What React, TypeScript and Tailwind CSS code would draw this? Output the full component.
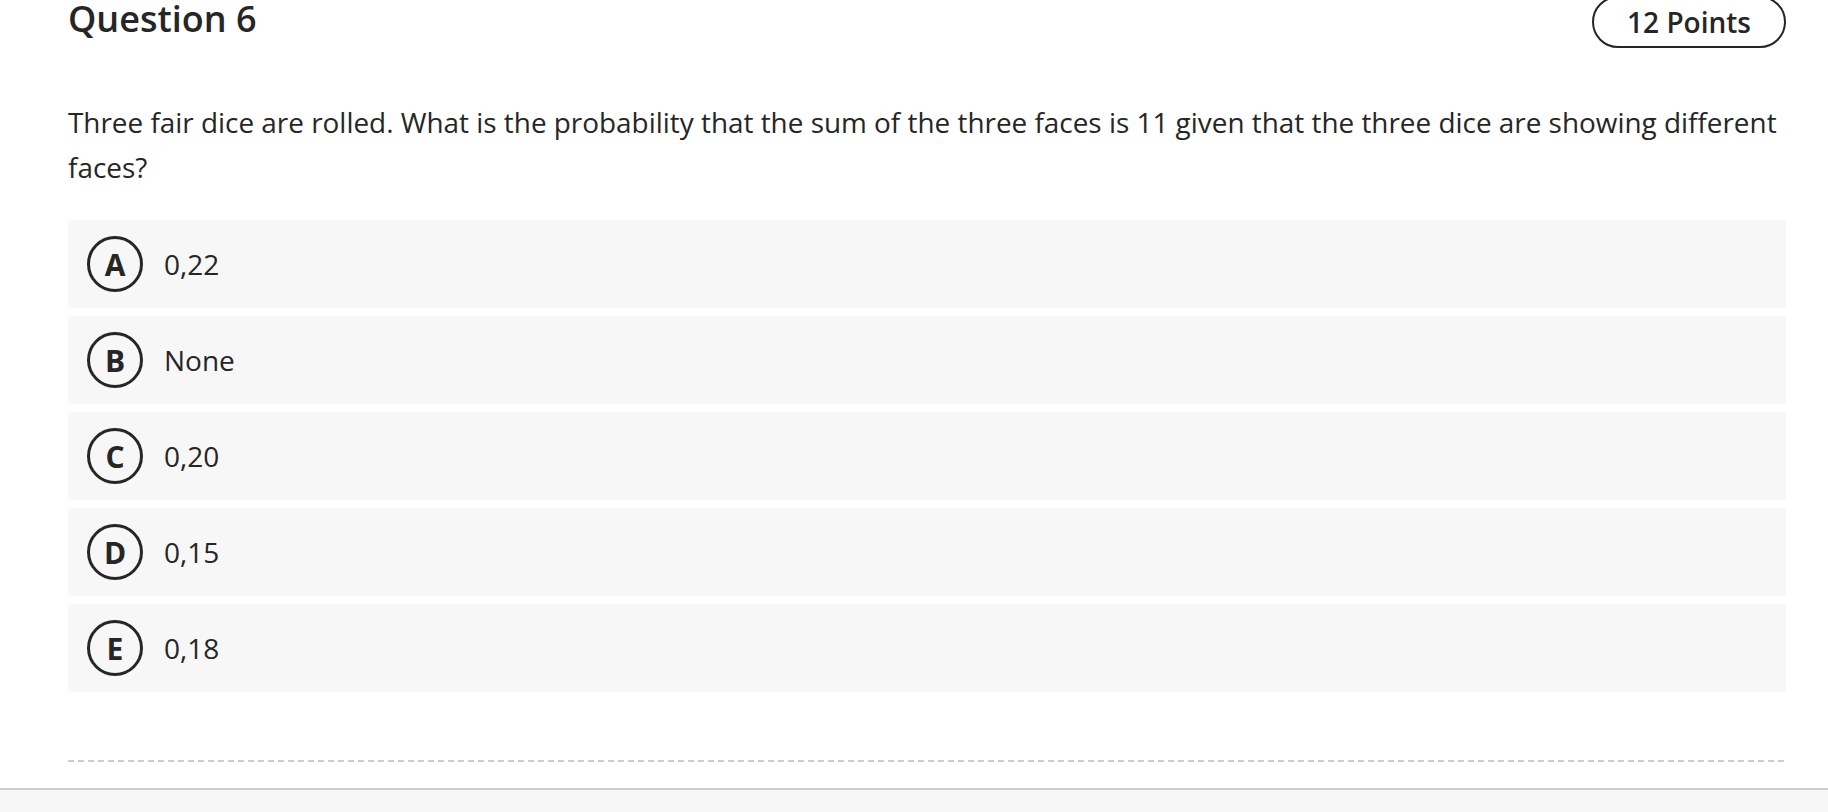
import React from "react";

const options = [
  { key: "A", text: "0,22" },
  { key: "B", text: "None" },
  { key: "C", text: "0,20" },
  { key: "D", text: "0,15" },
  { key: "E", text: "0,18" },
];

export default function App() {
  return (
    <div className="h-[812px] overflow-hidden bg-white text-[#262626] font-['Open_Sans',sans-serif]">
      <div className="pl-[68px] pr-[42px]">
        <div className="-mt-[4px] flex items-start justify-between">
          <h2 className="text-[36px] leading-[44px] font-semibold mt-[1px]">Question 6</h2>
          <div className="h-[52px] px-[33px] flex items-center rounded-full border-2 border-[#262626] text-[28px] font-semibold">
            12 Points
          </div>
        </div>

        <p className="mt-[52px] text-[27.9px] leading-[45px]">
          Three fair dice are rolled. What is the probability that the sum of the three faces is 11 given that the
          three dice are showing different faces?
        </p>

        <div className="mt-[30px] flex flex-col gap-2">
          {options.map((o) => (
            <div key={o.key} className="h-[88px] rounded-[4px] bg-[#f7f7f7] flex items-center pl-[19px] gap-[21px]">
              <div className="w-14 h-14 rounded-full border-[3px] border-[#262626] flex items-center justify-center text-[30px] font-bold">
                {o.key}
              </div>
              <span className="text-[28px] font-medium">{o.text}</span>
            </div>
          ))}
        </div>

        <div className="mt-[68px] h-[2px] bg-[repeating-linear-gradient(to_right,#cccccc_0,#cccccc_6px,transparent_6px,transparent_10px)]" />
      </div>
      <div className="mt-[26px] border-t-2 border-[#cccccc] bg-[#f7f7f7] h-[40px]" />
    </div>
  );
}
